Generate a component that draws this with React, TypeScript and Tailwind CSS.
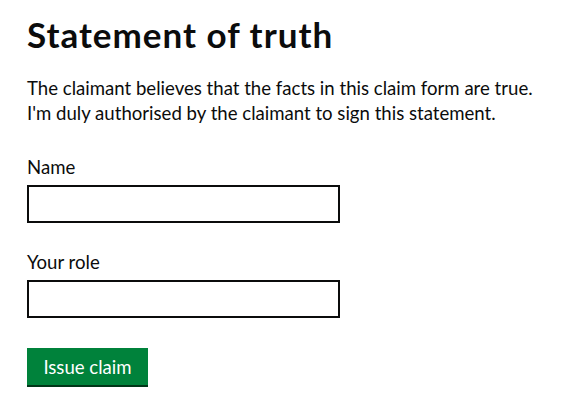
import React from "react";

const App: React.FC = () => {
  return (
    <div className="min-h-screen bg-white px-[27px] pt-[16px] text-[#0b0c0c] font-['Lato','Liberation_Sans',sans-serif]">
      <h1 className="text-[35px] leading-[36px] font-bold tracking-[1px]">Statement of truth</h1>

      <p className="mt-[24px] text-[18.6px] leading-[25px]">
        The claimant believes that the facts in this claim form are true.
        <br />
        I'm duly authorised by the claimant to sign this statement.
      </p>

      <div className="mt-[29px]">
        <label htmlFor="name" className="block text-[18.6px] leading-[25px]">
          Name
        </label>
        <input
          id="name"
          type="text"
          className="mt-[5px] block h-[38px] w-[313px] border-2 border-[#0b0c0c] bg-white px-1 outline-none"
        />
      </div>

      <div className="mt-[27px]">
        <label htmlFor="role" className="block text-[18.6px] leading-[25px]">
          Your role
        </label>
        <input
          id="role"
          type="text"
          className="mt-[5px] block h-[38px] w-[313px] border-2 border-[#0b0c0c] bg-white px-1 outline-none"
        />
      </div>

      <button
        type="button"
        className="mt-[30px] w-[121px] bg-[#00823b] pt-[8px] pb-[7px] text-center text-[18.6px] leading-[22px] text-white shadow-[0_2px_0_#003618]"
      >
        Issue claim
      </button>
    </div>
  );
};

export default App;
